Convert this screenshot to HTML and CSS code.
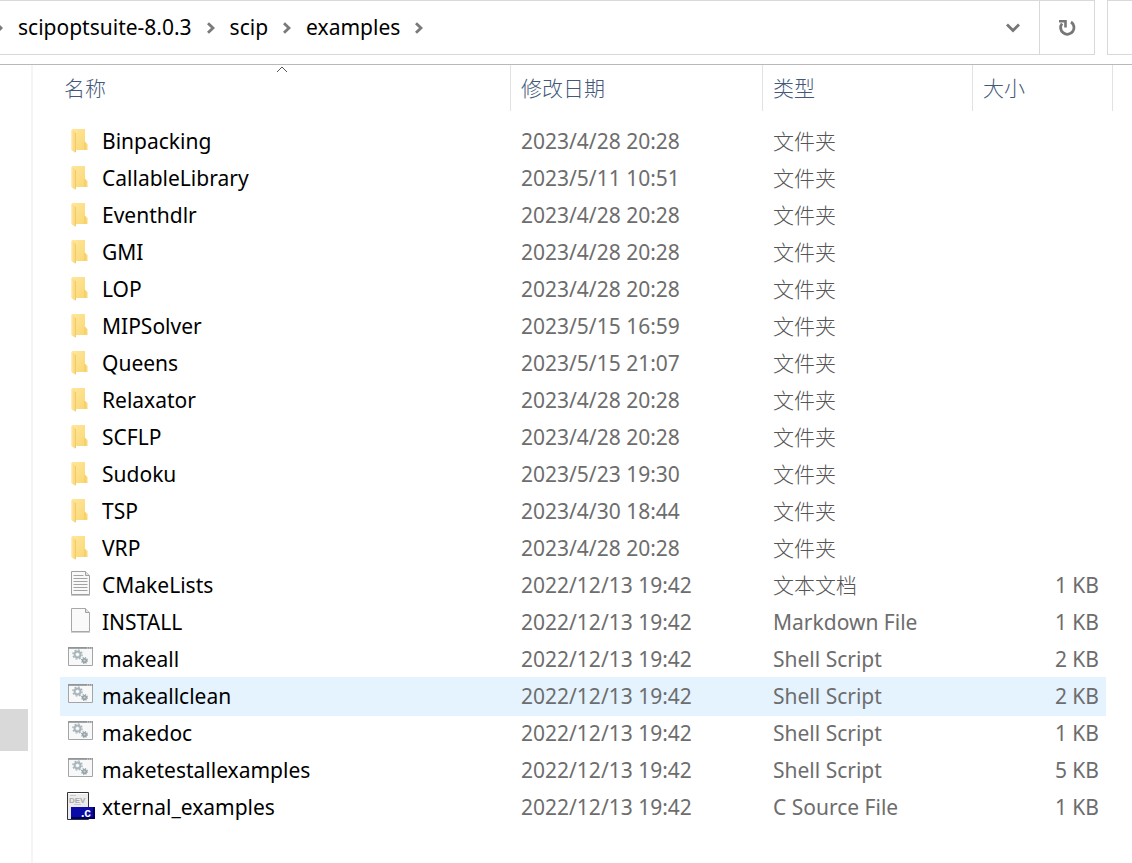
FILE: index.html
```html
<!DOCTYPE html>
<html lang="zh-CN">
<head>
  <meta charset="UTF-8">
  <meta name="viewport" content="width=device-width, initial-scale=1.0">
  <title>examples</title>
  <link rel="stylesheet" href="styles.css">
</head>
<body>
<!-- Shared icons -->
<svg class="icon-defs" aria-hidden="true">
  <linearGradient id="folderFill" x1="0" y1="0" x2="1" y2="1">
    <stop offset="0" stop-color="#ffe79c"/>
    <stop offset="1" stop-color="#f9d670"/>
  </linearGradient>
  <symbol id="chevron" viewBox="0 0 8 12">
    <path d="M1 1.200L6 6L1 10.800" fill="none" stroke="#7a7a7a" stroke-width="2.800"/>
  </symbol>
  <symbol id="folder" viewBox="0 0 28 28">
    <path d="M5 3h13v13l2.500 2v6H8z" fill="url(#folderFill)"/>
    <path d="M18 16v7.500" stroke="#f1c962" fill="none"/>
    <path d="M4.500 3.500l4 3v20.500l-4-3z" fill="#fbdc85"/>
    <path d="M5 4v20" stroke="#ffebb0" fill="none"/>
    <path d="M8.500 7v19" stroke="#f1cb6b" fill="none"/>
  </symbol>
  <symbol id="text" viewBox="0 0 28 28">
    <path d="M4.500 1.500h14l4 4v19h-18z" fill="#f9f9f9" stroke="#a0a0a0"/>
    <path d="M18.500 1.500v4h4" fill="#e2e2e2" stroke="#a0a0a0"/>
    <path d="M6.500 5.500h10M6.500 8.500h14M6.500 11.500h14M6.500 14.500h14M6.500 17.500h14M6.500 20.500h14" stroke="#a3a3a3"/>
    <path d="M4 25.500h19" stroke="#c8c8c8"/>
  </symbol>
  <symbol id="blank" viewBox="0 0 28 28">
    <path d="M4.500 1.500h14l4 4v19h-18z" fill="#fafafa" stroke="#a8a8a8"/>
    <path d="M18.500 1.500v4h4" fill="#e2e2e2" stroke="#a0a0a0"/>
    <path d="M4 25.500h19" stroke="#d0d0d0"/>
  </symbol>
  <symbol id="shell" viewBox="0 0 28 28">
    <path d="M1.500 3.500h24v18h-24z" fill="#f8f8f8" stroke="#a3a6a8"/>
    <path d="M1 4h25" stroke="#8d9194" stroke-width="1.600"/>
    <path d="M20 4h1M22 4h1M24 4h1" stroke="#dcdcdc"/>
    <circle cx="10.500" cy="10.500" r="3" fill="#dbe2e6" stroke="#a9b5bb" stroke-width="1.800"/>
    <circle cx="10.500" cy="10.500" r="4.600" fill="none" stroke="#a9b5bb" stroke-width="1.400" stroke-dasharray="1.800 1.812"/>
    <circle cx="10.500" cy="10.500" r="1.300" fill="#fff"/>
    <circle cx="17.500" cy="16.500" r="1.800" fill="#c9d2d7" stroke="#93a1a8" stroke-width="1.500"/>
    <circle cx="17.500" cy="16.500" r="3" fill="none" stroke="#93a1a8" stroke-width="1.100" stroke-dasharray="1.180 1.180"/>
  </symbol>
</svg>

<!-- Address bar -->
<header class="toolbar">
  <nav class="address">
    <div class="crumbs">
      <svg class="chevron"><use href="#chevron"/></svg>
      <a href="#">scipoptsuite-8.0.3</a>
      <svg class="chevron"><use href="#chevron"/></svg>
      <a href="#">scip</a>
      <svg class="chevron"><use href="#chevron"/></svg>
      <a href="#">examples</a>
      <svg class="chevron"><use href="#chevron"/></svg>
    </div>
    <button class="history" type="button" aria-label="历史记录">
      <svg width="14" height="10" viewBox="0 0 14 10"><path d="M1 1.500L7 7.500L13 1.500" fill="none" stroke="#777" stroke-width="2.800"/></svg>
    </button>
    <button class="refresh" type="button" aria-label="刷新">
      <svg width="18" height="18" viewBox="0 0 18 18">
        <path d="M13 3A6.700 6.700 0 1 1 4 4.500" fill="none" stroke="#777" stroke-width="2.800"/>
        <path d="M1 2.200h6.500v6.300" fill="none" stroke="#777" stroke-width="2.600"/>
      </svg>
    </button>
  </nav>
  <input class="search" type="text" aria-label="搜索">
</header>

<div class="main">
  <aside class="sidebar">
    <div class="sidebar-selected"></div>
  </aside>

  <!-- File list -->
  <main class="content">
    <table class="files">
      <colgroup>
        <col>
        <col class="col-date">
        <col class="col-type">
        <col class="col-size">
        <col class="col-end">
      </colgroup>
      <thead>
        <tr>
          <th class="sorted">
            <svg class="sort-arrow" width="12" height="7" viewBox="0 0 12 7"><path d="M1 6L6 1L11 6" fill="none" stroke="#555"/></svg>
            <button type="button">名称</button>
          </th>
          <th><button type="button">修改日期</button></th>
          <th><button type="button">类型</button></th>
          <th colspan="2"><button type="button">大小</button></th>
        </tr>
      </thead>
      <tbody>
        <tr><td class="name"><svg><use href="#folder"/></svg>Binpacking</td><td>2023/4/28 20:28</td><td class="zh">文件夹</td><td></td></tr>
        <tr><td class="name"><svg><use href="#folder"/></svg>CallableLibrary</td><td>2023/5/11 10:51</td><td class="zh">文件夹</td><td></td></tr>
        <tr><td class="name"><svg><use href="#folder"/></svg>Eventhdlr</td><td>2023/4/28 20:28</td><td class="zh">文件夹</td><td></td></tr>
        <tr><td class="name"><svg><use href="#folder"/></svg>GMI</td><td>2023/4/28 20:28</td><td class="zh">文件夹</td><td></td></tr>
        <tr><td class="name"><svg><use href="#folder"/></svg>LOP</td><td>2023/4/28 20:28</td><td class="zh">文件夹</td><td></td></tr>
        <tr><td class="name"><svg><use href="#folder"/></svg>MIPSolver</td><td>2023/5/15 16:59</td><td class="zh">文件夹</td><td></td></tr>
        <tr><td class="name"><svg><use href="#folder"/></svg>Queens</td><td>2023/5/15 21:07</td><td class="zh">文件夹</td><td></td></tr>
        <tr><td class="name"><svg><use href="#folder"/></svg>Relaxator</td><td>2023/4/28 20:28</td><td class="zh">文件夹</td><td></td></tr>
        <tr><td class="name"><svg><use href="#folder"/></svg>SCFLP</td><td>2023/4/28 20:28</td><td class="zh">文件夹</td><td></td></tr>
        <tr><td class="name"><svg><use href="#folder"/></svg>Sudoku</td><td>2023/5/23 19:30</td><td class="zh">文件夹</td><td></td></tr>
        <tr><td class="name"><svg><use href="#folder"/></svg>TSP</td><td>2023/4/30 18:44</td><td class="zh">文件夹</td><td></td></tr>
        <tr><td class="name"><svg><use href="#folder"/></svg>VRP</td><td>2023/4/28 20:28</td><td class="zh">文件夹</td><td></td></tr>
        <tr><td class="name"><svg><use href="#text"/></svg>CMakeLists</td><td>2022/12/13 19:42</td><td class="zh">文本文档</td><td class="size">1 KB</td></tr>
        <tr><td class="name"><svg><use href="#blank"/></svg>INSTALL</td><td>2022/12/13 19:42</td><td>Markdown File</td><td class="size">1 KB</td></tr>
        <tr><td class="name"><svg><use href="#shell"/></svg>makeall</td><td>2022/12/13 19:42</td><td>Shell Script</td><td class="size">2 KB</td></tr>
        <tr class="active"><td class="name"><svg><use href="#shell"/></svg>makeallclean</td><td>2022/12/13 19:42</td><td>Shell Script</td><td class="size">2 KB</td></tr>
        <tr><td class="name"><svg><use href="#shell"/></svg>makedoc</td><td>2022/12/13 19:42</td><td>Shell Script</td><td class="size">1 KB</td></tr>
        <tr><td class="name"><svg><use href="#shell"/></svg>maketestallexamples</td><td>2022/12/13 19:42</td><td>Shell Script</td><td class="size">5 KB</td></tr>
        <tr>
          <td class="name">
            <svg class="c-icon" viewBox="0 0 28 28">
              <path d="M.5.500h21v27H.5z" fill="#ececec" stroke="#333"/>
              <path d="M1.500 1.500h19" stroke="#fff"/>
              <path d="M3 3.500h6M7 12.500h7" stroke="#c8c8c8"/>
              <text x="2" y="11" font-size="8" fill="#a9a9a9">DEV</text>
              <path d="M4 15h24v12H4z" fill="#00005c"/>
              <path d="M4 15h22v10H4z" fill="#0a0aa8"/>
              <text x="14" y="25" font-size="12" fill="#fff">.c</text>
            </svg>xternal_examples
          </td>
          <td>2022/12/13 19:42</td><td>C Source File</td><td class="size">1 KB</td>
        </tr>
      </tbody>
    </table>
  </main>
</div>
</body>
</html>
```
FILE: styles.css
```css
* {
  box-sizing: border-box;
}
body {
  margin: 0;
  min-height: 100vh;
  display: flex;
  flex-direction: column;
  background: #fff;
  color: #000;
  font-family: "Noto Sans", "Noto Sans CJK SC", sans-serif;
  font-size: 21px;
  line-height: 37px;
}
button {
  padding: 0;
  border: none;
  background: none;
  font: inherit;
  color: inherit;
}
.icon-defs {
  position: absolute;
  width: 0;
  height: 0;
}

/* address bar */
.toolbar {
  display: flex;
  gap: 12px;
  height: 65px;
  padding-bottom: 9px;
  border-bottom: 1px solid #b9b9b9;
  overflow: hidden;
}
.address {
  flex: 1;
  display: flex;
  border: 1px solid #d9d9d9;
  border-left: none;
}
.crumbs {
  flex: 1;
  display: flex;
  align-items: center;
  gap: 15px;
  margin-left: -5px;
}
.crumbs a {
  color: #000;
  text-decoration: none;
}
.chevron {
  width: 8px;
  height: 12px;
}
.history,
.refresh {
  display: flex;
  align-items: center;
  justify-content: center;
  width: 52px;
}
.refresh {
  width: 55px;
  border-left: 1px solid #d9d9d9;
}
.search {
  width: 25px;
  border: 1px solid #d9d9d9;
  border-right: none;
  outline: none;
}

.main {
  flex: 1;
  display: flex;
}
.sidebar {
  width: 33px;
  border-right: 2px solid #f5f5f5;
}
.sidebar-selected {
  width: 28px;
  height: 42px;
  margin-top: 644px;
  background: #d9d9d9;
}
.content {
  flex: 1;
  padding: 0 19px 0 27px;
}

/* file list */
.files {
  width: 100%;
  table-layout: fixed;
  border-collapse: separate;
  border-spacing: 0;
}
.col-date {
  width: 252px;
}
.col-type {
  width: 210px;
}
.col-size {
  width: 133px;
}
.col-end {
  width: 7px;
}
th {
  position: relative;
  height: 46px;
  padding: 0 10px;
  border-right: 1px solid #e2e2e2;
  color: #44597a;
  font-weight: 300;
  text-align: left;
}
th.sorted {
  padding-left: 4px;
}
.sort-arrow {
  position: absolute;
  top: 1px;
  left: calc(50% - 9px);
}
tbody::before {
  content: "";
  display: block;
  height: 12px;
}
td {
  height: 37px;
  padding: 0 10px;
  color: #6d6d6d;
  white-space: nowrap;
}
.zh {
  font-weight: 300;
  color: #555;
}
.name {
  padding-left: 7px;
  color: #000;
}
.name svg {
  width: 28px;
  height: 28px;
  margin-right: 7px;
  vertical-align: -5px;
}
.c-icon text {
  font-family: "Liberation Sans", sans-serif;
  font-weight: bold;
}
.size {
  padding-right: 7px;
  text-align: right;
}
.active td {
  background: #e5f3ff;
  box-shadow: 0 1px #e5f3ff, 0 -1px #e5f3ff;
}
```
